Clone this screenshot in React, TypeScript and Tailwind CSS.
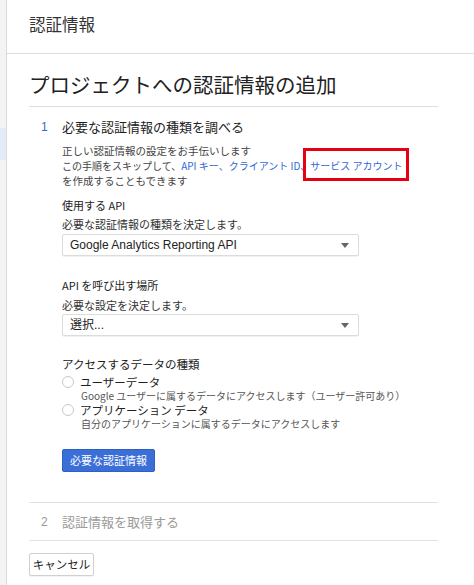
const FONT = { fontFamily: '"Noto Sans CJK JP", "Liberation Sans", sans-serif' };

function Caret() {
  return (
    <svg width="8" height="5" viewBox="0 0 8 5" className="shrink-0">
      <path d="M0 0 L8 0 L4 5 Z" fill="#666" />
    </svg>
  );
}

function Select({ value }: { value: string }) {
  return (
    <div className="w-[297px] h-[22px] border border-[#dcdcdc] rounded-[2px] bg-white flex items-center justify-between pl-[7px] pr-[9px] shadow-[0_1px_1px_rgba(0,0,0,0.06)]">
      <span className="text-[12px] text-[#222] font-['Liberation_Sans','Noto_Sans_CJK_JP',sans-serif] leading-none">{value}</span>
      <Caret />
    </div>
  );
}

function Radio({ label, sub }: { label: string; sub: string }) {
  return (
    <div>
      <div className="flex items-center h-[14px]">
        <span className="w-[12px] h-[12px] rounded-full border border-[#c8c8c8] bg-white shrink-0" />
        <span className="ml-[6px] text-[11.5px] text-[#222] leading-[14px]">{label}</span>
      </div>
      <div className="pl-[19px] text-[10px] text-[#555] leading-[14px]">{sub}</div>
    </div>
  );
}

export default function App() {
  return (
    <div className="w-[474px] h-[585px] flex bg-white overflow-hidden" style={FONT}>
      <div className="w-[7px] shrink-0 bg-[#f3f3f3] border-r border-[#dadada]">
        <div className="h-[128px]" />
        <div className="h-[32px] w-[6px] bg-[#e3ebf8]" />
      </div>

      <div className="flex-1 min-w-0">
        <div className="h-[54px] border-b border-[#dedede] pl-[22px] pt-[12px]">
          <div className="text-[16.5px] leading-[24px] text-[#333]">認証情報</div>
        </div>

        <div className="pl-[22px] w-[431px]">
          <div className="mt-[15px] pb-[7px] border-b border-[#dedede]">
            <div className="text-[20.5px] leading-[30px] text-[#212121]">プロジェクトへの認証情報の追加</div>
          </div>

          {/* step 1 */}
          <div className="pb-[30px] border-b border-[#e2e2e2]">
            <div className="mt-[10px] flex items-center h-[20px]">
              <span className="w-[21px] pl-[12px] box-content text-[12px] text-[#3367d6] font-['Liberation_Sans',sans-serif]">1</span>
              <span className="text-[13px] text-[#222]">必要な認証情報の種類を調べる</span>
            </div>

            <div className="pl-[33px]">
              <div className="relative mt-[6px] text-[10.5px] leading-[15px] text-[#444]">
                <div>正しい認証情報の設定をお手伝いします</div>
                <div className="whitespace-nowrap text-[10px]">
                  この手順をスキップして、
                  <span className="text-[#3367d6]">API キー、クライアント ID、サービス アカウント</span>
                </div>
                <div>を作成することもできます</div>
                <div className="absolute left-[241px] top-[5px] w-[106px] h-[33px] border-[3px] border-[#e60012]" />
              </div>

              <div className="mt-[8px] text-[11px] leading-[18px] text-[#222]">使用する API</div>
              <div className="mt-[1px] text-[11px] leading-[18px] text-[#333]">必要な認証情報の種類を決定します。</div>
              <div className="mt-[1px]">
                <Select value="Google Analytics Reporting API" />
              </div>

              <div className="mt-[20px] text-[11px] leading-[18px] text-[#222]">API を呼び出す場所</div>
              <div className="mt-[2px] text-[11px] leading-[18px] text-[#333]">必要な設定を決定します。</div>
              <div>
                <Select value="選択..." />
              </div>

              <div className="mt-[19px] text-[11.5px] leading-[18px] text-[#222]">アクセスするデータの種類</div>
              <div className="mt-[2px]">
                <Radio label="ユーザーデータ" sub="Google ユーザーに属するデータにアクセスします（ユーザー許可あり）" />
                <Radio label="アプリケーション データ" sub="自分のアプリケーションに属するデータにアクセスします" />
              </div>

              <button className="mt-[18px] h-[23px] w-[93px] rounded-[2px] bg-[#3b6fd8] border border-[#2f5fc4] text-white text-[11px] leading-none">
                必要な認証情報
              </button>
            </div>
          </div>

          {/* step 2 */}
          <div className="pb-[8px] border-b border-[#e2e2e2]">
            <div className="mt-[9px] flex items-center h-[20px]">
              <span className="w-[21px] pl-[12px] box-content text-[12px] text-[#9a9a9a] font-['Liberation_Sans',sans-serif]">2</span>
              <span className="text-[13px] text-[#9a9a9a]">認証情報を取得する</span>
            </div>
          </div>

          <button className="mt-[12px] h-[23px] w-[65px] rounded-[2px] bg-white border border-[#d0d0d0] text-[11.5px] text-[#222] leading-none shadow-[0_1px_1px_rgba(0,0,0,0.05)]">
            キャンセル
          </button>
        </div>
      </div>
    </div>
  );
}
